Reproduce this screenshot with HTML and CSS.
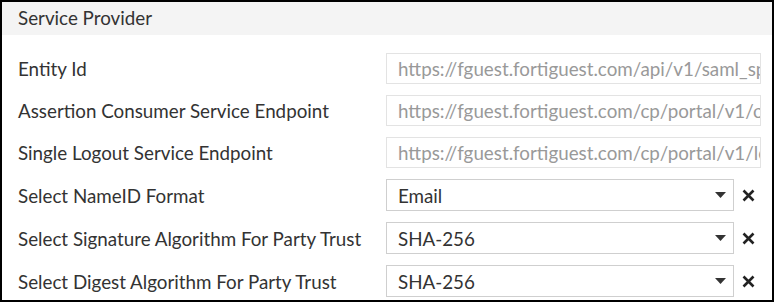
FILE: index.html
```html
<!DOCTYPE html>
<html lang="en">
<head>
    <meta charset="UTF-8">
    <title>Service Provider</title>
    <link rel="stylesheet" href="styles.css">
</head>
<body>
    <div class="panel">
        <div class="panel-header">Service Provider</div>

        <div class="panel-body">
            <div class="form-row">
                <label class="form-label">Entity Id</label>
                <input class="text-field" type="text" readonly value="https://fguest.fortiguest.com/api/v1/saml_sp/metadata">
            </div>

            <div class="form-row">
                <label class="form-label">Assertion Consumer Service Endpoint</label>
                <input class="text-field" type="text" readonly value="https://fguest.fortiguest.com/cp/portal/v1/consume">
            </div>

            <div class="form-row">
                <label class="form-label">Single Logout Service Endpoint</label>
                <input class="text-field" type="text" readonly value="https://fguest.fortiguest.com/cp/portal/v1/logout">
            </div>

            <div class="form-row select-row">
                <label class="form-label">Select NameID Format</label>
                <div class="select-box">
                    <span>Email</span>
                    <svg class="caret" width="11" height="6" viewBox="0 0 11 6"><path d="M0 0h11L5.5 6z" fill="#333"/></svg>
                </div>
                <svg class="clear-btn" width="13" height="13" viewBox="0 0 13 13"><path d="M1.5 1.5l10 10M11.5 1.5l-10 10" stroke="#222" stroke-width="2.6" fill="none"/></svg>
            </div>

            <div class="form-row select-row">
                <label class="form-label">Select Signature Algorithm For Party Trust</label>
                <div class="select-box">
                    <span>SHA-256</span>
                    <svg class="caret" width="11" height="6" viewBox="0 0 11 6"><path d="M0 0h11L5.5 6z" fill="#333"/></svg>
                </div>
                <svg class="clear-btn" width="13" height="13" viewBox="0 0 13 13"><path d="M1.5 1.5l10 10M11.5 1.5l-10 10" stroke="#222" stroke-width="2.6" fill="none"/></svg>
            </div>

            <div class="form-row select-row">
                <label class="form-label">Select Digest Algorithm For Party Trust</label>
                <div class="select-box">
                    <span>SHA-256</span>
                    <svg class="caret" width="11" height="6" viewBox="0 0 11 6"><path d="M0 0h11L5.5 6z" fill="#333"/></svg>
                </div>
                <svg class="clear-btn" width="13" height="13" viewBox="0 0 13 13"><path d="M1.5 1.5l10 10M11.5 1.5l-10 10" stroke="#222" stroke-width="2.6" fill="none"/></svg>
            </div>
        </div>
    </div>
</body>
</html>
```

FILE: styles.css
```css
body {
    margin: 0;
    font-family: Lato, 'Open Sans', sans-serif;
    color: #333;
    background: #fff;
}

.panel {
    width: 774px;
    height: 302px;
    border: 2px solid #000;
    box-sizing: border-box;
    overflow: hidden;
}

.panel-header {
    height: 33px;
    line-height: 32px;
    padding-left: 16px;
    background: #f4f4f4;
    font-size: 18.8px;
}

.panel-body {
    padding: 18px 0 0 16px;
}

.form-row {
    display: flex;
    align-items: center;
    height: 31px;
    margin-bottom: 11px;
}

.select-row {
    height: 32px;
}

.form-label {
    width: 368px;
    font-size: 18.8px;
    flex-shrink: 0;
}

.text-field {
    width: 375px;
    height: 31px;
    box-sizing: border-box;
    margin: 0;
    padding: 0 0 0 11px;
    border: 1px solid #e3e3e3;
    font-family: inherit;
    font-size: 18.8px;
    color: #999;
    background: #fff;
    outline: none;
}

.select-box {
    width: 348px;
    height: 32px;
    box-sizing: border-box;
    border: 1px solid #cfcfcf;
    padding: 0 7px 0 11px;
    display: flex;
    align-items: center;
    justify-content: space-between;
    font-size: 18.8px;
    color: #333;
}

.clear-btn {
    margin-left: 8px;
}
```
